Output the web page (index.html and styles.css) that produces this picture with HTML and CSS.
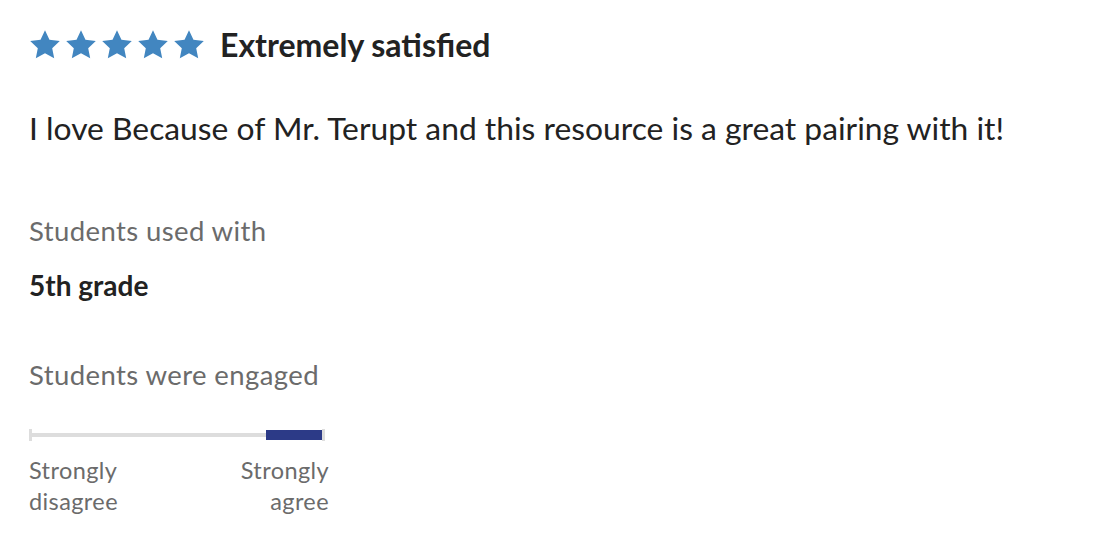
FILE: index.html
```html
<!DOCTYPE html>
<html>
<head>
<meta charset="utf-8">
<link rel="stylesheet" href="styles.css">
</head>
<body>
<div class="review">
  <div class="rating">
    <div class="stars">
      <svg class="star" viewBox="0 0 24 24"><path d="M12 1l3.35 7.05 7.75.95-5.7 5.35 1.5 7.65L12 18.2l-6.9 3.8 1.5-7.65L.9 9l7.75-.95z"/></svg>
      <svg class="star" viewBox="0 0 24 24"><path d="M12 1l3.35 7.05 7.75.95-5.7 5.35 1.5 7.65L12 18.2l-6.9 3.8 1.5-7.65L.9 9l7.75-.95z"/></svg>
      <svg class="star" viewBox="0 0 24 24"><path d="M12 1l3.35 7.05 7.75.95-5.7 5.35 1.5 7.65L12 18.2l-6.9 3.8 1.5-7.65L.9 9l7.75-.95z"/></svg>
      <svg class="star" viewBox="0 0 24 24"><path d="M12 1l3.35 7.05 7.75.95-5.7 5.35 1.5 7.65L12 18.2l-6.9 3.8 1.5-7.65L.9 9l7.75-.95z"/></svg>
      <svg class="star" viewBox="0 0 24 24"><path d="M12 1l3.35 7.05 7.75.95-5.7 5.35 1.5 7.65L12 18.2l-6.9 3.8 1.5-7.65L.9 9l7.75-.95z"/></svg>
    </div>
    <span class="rating-text">Extremely satisfied</span>
  </div>
  <p class="comment">I love Because of Mr. Terupt and this resource is a great pairing with it!</p>
  <div class="field field-first">
    <div class="label">Students used with</div>
    <div class="value">5th grade</div>
  </div>
  <div class="field field-second">
    <div class="label">Students were engaged</div>
    <div class="scale">
      <div class="track"><div class="fill"></div></div>
      <div class="scale-labels">
        <span>Strongly<br>disagree</span>
        <span class="right">Strongly<br>agree</span>
      </div>
    </div>
  </div>
</div>
</body>
</html>
```
FILE: styles.css
```css
html, body {
  margin: 0;
  padding: 0;
  background: #fff;
}
body {
  font-family: Lato, "Noto Sans", sans-serif;
  color: #222;
}
.review {
  padding: 30px 29px;
}
.rating {
  display: flex;
  align-items: center;
  gap: 15px;
  height: 30px;
}
.stars {
  display: flex;
  gap: 4px;
}
.star {
  width: 32px;
  height: 32px;
  fill: #4286c0;
  display: block;
}
.rating-text {
  font-size: 32px;
  line-height: 30px;
  font-weight: 700;
  color: #222;
}
.comment {
  margin: 48px 0 0;
  font-size: 31.8px;
  line-height: 40px;
  color: #222;
}
.field-first {
  margin-top: 67px;
}
.field-second {
  margin-top: 58px;
}
.label {
  font-size: 27.5px;
  letter-spacing: 0.4px;
  color: #6b6b6b;
  line-height: 32px;
}
.value {
  margin-top: 22px;
  font-size: 28px;
  font-weight: 700;
  line-height: 32px;
  color: #222;
}
.scale {
  width: 300px;
  margin-top: 42px;
}
.track {
  position: relative;
  height: 4px;
  background: #dddddd;
  margin-right: 4px;
}
.track::before,
.track::after {
  content: "";
  position: absolute;
  top: -4px;
  width: 3px;
  height: 12px;
  background: #dddddd;
}
.track::before {
  left: 0;
}
.track::after {
  right: 0;
}
.fill {
  position: absolute;
  right: 3px;
  top: -3px;
  width: 56px;
  height: 10px;
  background: #2c3a87;
}
.scale-labels {
  display: flex;
  justify-content: space-between;
  margin-top: 18px;
  font-size: 23.5px;
  letter-spacing: 0.4px;
  line-height: 31px;
  color: #6b6b6b;
}
.scale-labels .right {
  text-align: right;
}
```
